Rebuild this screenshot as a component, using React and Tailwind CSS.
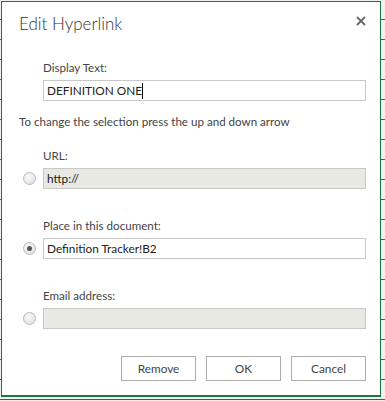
import React from "react";

const Radio = ({ checked }) => (
  <span className="w-[13px] h-[13px] rounded-full border border-[#b9b9b9] bg-[radial-gradient(circle_at_40%_35%,#fafafa,#dcdcdc)] flex items-center justify-center shrink-0">
    {checked && <span className="w-[5px] h-[5px] rounded-full bg-[#555]" />}
  </span>
);

const Field = ({ label, value, disabled, checked }) => (
  <div className="flex flex-col">
    <div className="pl-[41px] text-[11.6px] leading-[18px] text-[#444]">{label}</div>
    <div className="flex items-center mt-[3px]">
      <div className="w-[41px] flex justify-start pl-[21px]">
        <Radio checked={checked} />
      </div>
      <div
        className={`w-[323px] h-[21px] border border-[#c8c8c8] flex items-center px-[3px] text-[11.8px] text-[#222] ${
          disabled ? "bg-[#e9e9e3]" : "bg-white"
        }`}
      >
        {value}
      </div>
    </div>
  </div>
);

export default function App() {
  return (
    <div className="w-[385px] h-[401px] bg-[#eef3ef] bg-[repeating-linear-gradient(to_bottom,transparent_0px,transparent_19px,#555_19px,#555_20px)] font-['Segoe_UI','Lato',sans-serif] overflow-hidden">
      <div className="ml-[1px] mt-[1px] w-[380px] h-[396px] bg-white border border-[#217346] border-b-2 flex flex-col">
        {/* Header */}
        <div className="flex items-start justify-between pl-[17px] pr-[14px] pt-[10px]">
          <h1 className="text-[17px] leading-[24px] font-light text-[#333]">Edit Hyperlink</h1>
          <svg width="10" height="10" viewBox="0 0 10 10" className="mt-[4px]">
            <path d="M1 1L9 9M9 1L1 9" stroke="#666" strokeWidth="1.8" />
          </svg>
        </div>

        {/* Display text */}
        <div className="pl-[41px] mt-[23px] text-[11.6px] leading-[18px] text-[#444]">Display Text:</div>
        <div className="pl-[41px] mt-[3px]">
          <div className="w-[323px] h-[21px] border border-[#c8c8c8] flex items-center px-[3px] text-[11.8px] text-[#222]">
            DEFINITION ONE
            <span className="w-px h-[16px] bg-black" />
          </div>
        </div>
        <p className="pl-[17px] mt-[12px] text-[11.6px] leading-[18px] text-[#444]">
          To change the selection press the up and down arrow
        </p>

        <div className="mt-[16px] flex flex-col gap-[28px]">
          <Field label="URL:" value="http://" disabled />
          <Field label="Place in this document:" value="Definition Tracker!B2" checked />
          <Field label="Email address:" value="" disabled />
        </div>

        {/* Buttons */}
        <div className="mt-auto mb-[14px] flex justify-end gap-[10px] pr-[14px]">
          {["Remove", "OK", "Cancel"].map((b) => (
            <button
              key={b}
              className="w-[75px] h-[25px] border border-[#adadad] bg-white text-[11.8px] text-[#444]"
            >
              {b}
            </button>
          ))}
        </div>
      </div>
    </div>
  );
}
